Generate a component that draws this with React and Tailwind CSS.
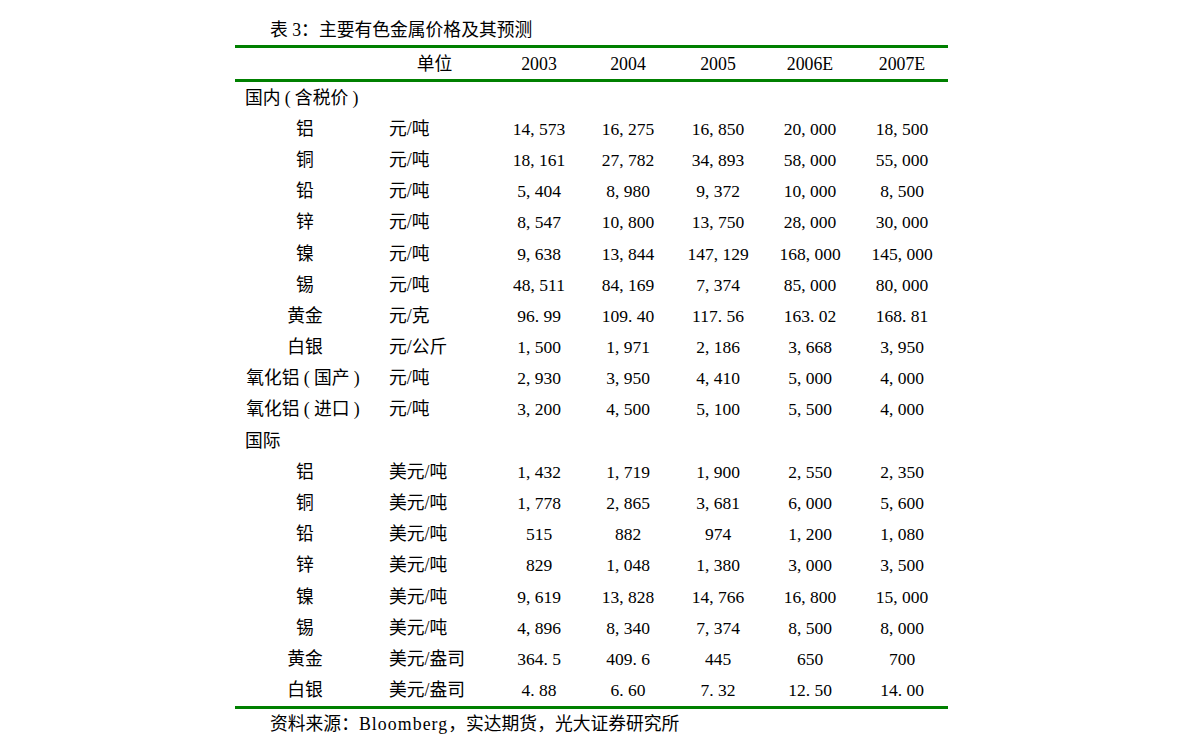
import React from "react";

const domestic = [
  ["铝", "元/吨", "14,573", "16,275", "16,850", "20,000", "18,500"],
  ["铜", "元/吨", "18,161", "27,782", "34,893", "58,000", "55,000"],
  ["铅", "元/吨", "5,404", "8,980", "9,372", "10,000", "8,500"],
  ["锌", "元/吨", "8,547", "10,800", "13,750", "28,000", "30,000"],
  ["镍", "元/吨", "9,638", "13,844", "147,129", "168,000", "145,000"],
  ["锡", "元/吨", "48,511", "84,169", "7,374", "85,000", "80,000"],
  ["黄金", "元/克", "96.99", "109.40", "117.56", "163.02", "168.81"],
  ["白银", "元/公斤", "1,500", "1,971", "2,186", "3,668", "3,950"],
  ["氧化铝(国产)", "元/吨", "2,930", "3,950", "4,410", "5,000", "4,000"],
  ["氧化铝(进口)", "元/吨", "3,200", "4,500", "5,100", "5,500", "4,000"],
];

const intl = [
  ["铝", "美元/吨", "1,432", "1,719", "1,900", "2,550", "2,350"],
  ["铜", "美元/吨", "1,778", "2,865", "3,681", "6,000", "5,600"],
  ["铅", "美元/吨", "515", "882", "974", "1,200", "1,080"],
  ["锌", "美元/吨", "829", "1,048", "1,380", "3,000", "3,500"],
  ["镍", "美元/吨", "9,619", "13,828", "14,766", "16,800", "15,000"],
  ["锡", "美元/吨", "4,896", "8,340", "7,374", "8,500", "8,000"],
  ["黄金", "美元/盎司", "364.5", "409.6", "445", "650", "700"],
  ["白银", "美元/盎司", "4.88", "6.60", "7.32", "12.50", "14.00"],
];

const years = ["2003", "2004", "2005", "2006E", "2007E"];
const cols = "grid grid-cols-[140px_119px_90px_88px_92px_92px_92px]";

// SimSun-like half-width punctuation: give , and . a half-em cell
function Num({ v }) {
  return (
    <span className="text-[17.5px]">
      {v.split("").map((c, i) =>
        c === "," || c === "." ? (
          <span key={i} className="inline-block w-[0.5em] text-left">{c}</span>
        ) : (
          <span key={i}>{c}</span>
        )
      )}
    </span>
  );
}

// parens get a wider cell, like the song-ti original
function Label({ t }) {
  return (
    <span className="whitespace-nowrap">
      {t.split("").map((c, i) =>
        c === "(" || c === ")" ? (
          <span key={i} className="inline-block w-[0.8em] text-center">{c}</span>
        ) : (
          <span key={i}>{c}</span>
        )
      )}
    </span>
  );
}

function Row({ r }) {
  return (
    <div className={`${cols} h-[31.2px] items-center`}>
      <div className="text-center"><Label t={r[0]} /></div>
      <div className="pl-[14px]">{r[1]}</div>
      {r.slice(2).map((v, i) => (
        <div key={i} className="text-center">
          <Num v={v} />
        </div>
      ))}
    </div>
  );
}

function Section({ title }) {
  return (
    <div className="h-[31.2px] flex items-center pl-[10px]"><Label t={title} /></div>
  );
}

export default function App() {
  return (
    <div
      className="w-[1191px] h-[754px] bg-white text-black text-[17.8px] leading-6"
      style={{ fontFamily: '"Liberation Serif", "Noto Sans CJK SC", serif' }}
    >
      <div className="ml-[235px] w-[713px] pt-[18px]">
        <div className="pl-[35px] mb-[3px]">表 3：主要有色金属价格及其预测</div>
        <div className="h-[3px] bg-[#008000]" />
        <div className={`${cols} h-[31px] items-center`}>
          <div />
          <div className="text-center">单位</div>
          {years.map((y) => (
            <div key={y} className="text-center">{y}</div>
          ))}
        </div>
        <div className="h-[3px] bg-[#008000]" />
        <Section title="国内(含税价)" />
        {domestic.map((r, i) => (
          <Row key={"d" + i} r={r} />
        ))}
        <Section title="国际" />
        {intl.map((r, i) => (
          <Row key={"i" + i} r={r} />
        ))}
        <div className="h-[3px] bg-[#008000]" />
        <div className="pl-[35px] mt-[3px]">
          资料来源：<span className="tracking-[0.06em]">Bloomberg</span>，实达期货，光大证券研究所
        </div>
      </div>
    </div>
  );
}
